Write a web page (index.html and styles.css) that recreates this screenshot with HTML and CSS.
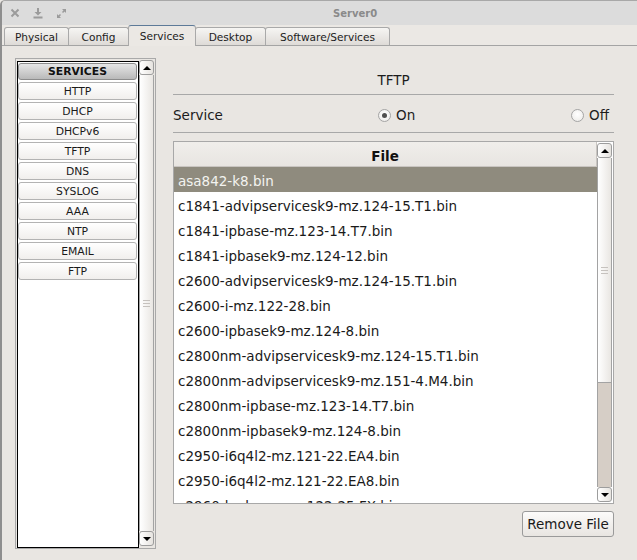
FILE: index.html
```html
<!DOCTYPE html>
<html>
<head>
<meta charset="utf-8">
<link rel="stylesheet" href="styles.css">
</head>
<body>
<div class="window">
  <div class="titlebar">
    <div class="tb-icons">
      <svg class="tb-icon" width="10" height="10" viewBox="0 0 10 10"><path d="M1.5 1.5 L8.5 8.5 M8.5 1.5 L1.5 8.5" stroke="#9b9b9b" stroke-width="2"/></svg>
      <svg class="tb-icon" width="10" height="11" viewBox="0 0 10 11"><path d="M5 0 V6" stroke="#9b9b9b" stroke-width="2"/><path d="M1.5 4 L5 7.5 L8.5 4 Z" fill="#9b9b9b"/><path d="M0.5 9.5 H9.5" stroke="#9b9b9b" stroke-width="2"/></svg>
      <svg class="tb-icon" width="11" height="11" viewBox="0 0 11 11"><path d="M6 1 H10 V5 Z" fill="#9b9b9b"/><path d="M8.5 2.5 L6.5 4.5" stroke="#9b9b9b" stroke-width="1.6"/><path d="M1 6 V10 H5 Z" fill="#9b9b9b"/><path d="M2.5 8.5 L4.5 6.5" stroke="#9b9b9b" stroke-width="1.6"/></svg>
    </div>
    <div class="tb-title">Server0</div>
  </div>
  <div class="tabs">
    <div class="tab tab-physical">Physical</div>
    <div class="tab tab-config">Config</div>
    <div class="tab tab-services active">Services</div>
    <div class="tab tab-desktop">Desktop</div>
    <div class="tab tab-software">Software/Services</div>
  </div>
  <div class="content">
    <div class="svc-panel">
      <div class="svc-list">
        <div class="svc-header">SERVICES</div>
        <div class="svc-btn">HTTP</div>
        <div class="svc-btn">DHCP</div>
        <div class="svc-btn">DHCPv6</div>
        <div class="svc-btn">TFTP</div>
        <div class="svc-btn">DNS</div>
        <div class="svc-btn">SYSLOG</div>
        <div class="svc-btn">AAA</div>
        <div class="svc-btn">NTP</div>
        <div class="svc-btn">EMAIL</div>
        <div class="svc-btn">FTP</div>
      </div>
      <div class="vscroll vscroll-left">
        <div class="sb-btn"><span class="arrow-up"></span></div>
        <div class="sb-thumb thumb-full"><span class="grip"></span></div>
        <div class="sb-btn"><span class="arrow-down"></span></div>
      </div>
    </div>
    <div class="main">
      <div class="main-title">TFTP</div>
      <div class="service-row">
        <div class="service-label">Service</div>
        <div class="radio-group"><span class="radio checked"></span><span>On</span></div>
        <div class="radio-group"><span class="radio"></span><span>Off</span></div>
      </div>
      <div class="file-table">
        <div class="file-col">
          <div class="file-header">File</div>
          <div class="file-rows">
            <div class="file-row selected">asa842-k8.bin</div>
            <div class="file-row">c1841-advipservicesk9-mz.124-15.T1.bin</div>
            <div class="file-row">c1841-ipbase-mz.123-14.T7.bin</div>
            <div class="file-row">c1841-ipbasek9-mz.124-12.bin</div>
            <div class="file-row">c2600-advipservicesk9-mz.124-15.T1.bin</div>
            <div class="file-row">c2600-i-mz.122-28.bin</div>
            <div class="file-row">c2600-ipbasek9-mz.124-8.bin</div>
            <div class="file-row">c2800nm-advipservicesk9-mz.124-15.T1.bin</div>
            <div class="file-row">c2800nm-advipservicesk9-mz.151-4.M4.bin</div>
            <div class="file-row">c2800nm-ipbase-mz.123-14.T7.bin</div>
            <div class="file-row">c2800nm-ipbasek9-mz.124-8.bin</div>
            <div class="file-row">c2950-i6q4l2-mz.121-22.EA4.bin</div>
            <div class="file-row">c2950-i6q4l2-mz.121-22.EA8.bin</div>
            <div class="file-row">c2960-lanbase-mz.122-25.FX.bin</div>
          </div>
        </div>
        <div class="vscroll vscroll-table">
          <div class="sb-btn"><span class="arrow-up"></span></div>
          <div class="sb-thumb thumb-table"><span class="grip"></span></div>
          <div class="sb-track"></div>
          <div class="sb-btn"><span class="arrow-down"></span></div>
        </div>
      </div>
      <div class="actions">
        <button class="remove-btn">Remove File</button>
      </div>
    </div>
  </div>
</div>
</body>
</html>
```
FILE: styles.css
```css
html, body {
  margin: 0;
  padding: 0;
}
body {
  width: 637px;
  height: 560px;
  overflow: hidden;
  background: #e9e6e2;
  font-family: "DejaVu Sans", "Noto Sans", sans-serif;
  color: #1c1c1c;
}
.window {
  height: 560px;
  box-sizing: border-box;
  border-left: 2px solid #8e8e8e;
  border-top: 1px solid #a8a8a8;
  border-top-left-radius: 5px;
  display: flex;
  flex-direction: column;
  background: #e9e6e2;
}
.titlebar {
  height: 24px;
  flex: none;
  background: #dcdcdc;
  display: flex;
  align-items: center;
  border-top-left-radius: 4px;
}
.tb-icons {
  display: flex;
  align-items: center;
  gap: 13px;
  padding-left: 8px;
  width: 62px;
}
.tb-icon {
  display: block;
}
.tb-title {
  margin-left: 261px;
  font-size: 10px;
  font-weight: bold;
  color: #8a8a8a;
}
.tabs {
  height: 20px;
  flex: none;
  display: flex;
  align-items: flex-end;
  padding-left: 2px;
  border-bottom: 1px solid #a4a4a4;
  background: #ebe8e4;
}
.tab {
  box-sizing: border-box;
  height: 18px;
  border: 1px solid #a9a9a9;
  border-bottom: none;
  border-radius: 3px 3px 0 0;
  background: linear-gradient(#f6f5f3, #dedbd7);
  font-size: 10.6px;
  line-height: 19px;
  text-align: center;
  color: #1c1c1c;
  margin-right: -1px;
}
.tab-physical { width: 65px; }
.tab-config { width: 61px; }
.tab-services { width: 68px; }
.tab-desktop { width: 71px; }
.tab-software { width: 125px; }
.tab.active {
  height: 21px;
  margin-bottom: -1px;
  background: #ebe8e4;
  border-top: 1px solid #5d7a98;
  line-height: 20px;
  position: relative;
  z-index: 1;
}
.content {
  display: flex;
  padding: 12px 0 0 13px;
  align-items: flex-start;
}
.svc-panel {
  box-sizing: border-box;
  width: 141px;
  height: 491px;
  border: 1px solid #a9a9a9;
  padding: 1px 1px 2px 1px;
  display: flex;
}
.svc-list {
  box-sizing: border-box;
  width: 122px;
  height: 487px;
  margin-top: 1px;
  border: 1px solid #000;
  background: #fff;
  display: flex;
  flex-direction: column;
  gap: 2px;
  padding-top: 1px;
}
.svc-header, .svc-btn {
  box-sizing: border-box;
  width: 119px;
  height: 18px;
  border-radius: 3px;
  font-size: 10.8px;
  line-height: 18px;
  text-align: center;
}
.svc-header {
  border: 1px solid #8c8c8c;
  background: linear-gradient(#e6e6e6, #b9b9b9);
  font-weight: bold;
  color: #111;
  height: 17px;
  line-height: 16px;
}
.svc-btn {
  border: 1px solid #b3b3b3;
  background: linear-gradient(#ffffff, #f1efed);
  color: #1a1a1a;
}
.vscroll {
  width: 15px;
  display: flex;
  flex-direction: column;
  flex: none;
}
.vscroll-left {
  height: 486px;
}
.sb-btn {
  box-sizing: border-box;
  height: 15px;
  flex: none;
  border: 1px solid #9d9d9d;
  border-radius: 3px;
  background: linear-gradient(90deg, #ffffff, #e6e3df);
  display: flex;
  align-items: center;
  justify-content: center;
}
.arrow-up {
  width: 0;
  height: 0;
  border-left: 4px solid transparent;
  border-right: 4px solid transparent;
  border-bottom: 4px solid #000;
}
.arrow-down {
  width: 0;
  height: 0;
  border-left: 4px solid transparent;
  border-right: 4px solid transparent;
  border-top: 4px solid #000;
}
.sb-thumb {
  box-sizing: border-box;
  border: 1px solid #a3a3a3;
  border-top: none;
  border-bottom: 1px solid #a3a3a3;
  background: linear-gradient(90deg, #ffffff, #e9e6e2);
  display: flex;
  align-items: center;
  justify-content: center;
}
.thumb-full {
  flex: 1;
  border-bottom: none;
}
.thumb-table {
  height: 225px;
  flex: none;
}
.grip {
  width: 7px;
  height: 7px;
  background: repeating-linear-gradient(#c6c2be 0, #c6c2be 1px, transparent 1px, transparent 3px);
}
.sb-track {
  flex: 1;
  background: #d6cec6;
  border-left: 1px solid #a3a3a3;
  border-right: 1px solid #a3a3a3;
}
.main {
  width: 441px;
  margin-left: 17px;
  display: flex;
  flex-direction: column;
}
.main-title {
  height: 21px;
  padding-top: 15px;
  line-height: 14px;
  font-size: 13.5px;
  text-align: center;
  border-bottom: 1px solid #a8a8a8;
  color: #1c1c1c;
}
.service-row {
  box-sizing: border-box;
  height: 38px;
  padding-top: 3px;
  border-bottom: 1px solid #a8a8a8;
  display: grid;
  grid-template-columns: 205px 1fr auto;
  align-items: center;
  font-size: 13.5px;
  padding-right: 5px;
}
.radio-group {
  display: flex;
  align-items: center;
  gap: 5px;
}
.radio {
  box-sizing: border-box;
  width: 13px;
  height: 13px;
  border-radius: 50%;
  border: 1px solid #a5a5a5;
  background: radial-gradient(circle at 50% 40%, #ffffff, #ebe9e6);
  display: flex;
  align-items: center;
  justify-content: center;
}
.radio.checked::after {
  content: "";
  width: 5px;
  height: 5px;
  border-radius: 50%;
  background: #4f4f4f;
}
.file-table {
  box-sizing: border-box;
  margin-top: 8px;
  height: 363px;
  border: 1px solid #a8a8a8;
  display: flex;
  background: #fff;
}
.file-col {
  flex: 1;
  display: flex;
  flex-direction: column;
  overflow: hidden;
}
.file-header {
  box-sizing: border-box;
  height: 25px;
  flex: none;
  background: linear-gradient(#f0eeeb, #e8e5e1);
  border-bottom: 1px solid #c9c5c1;
  border-right: 1px solid #c9c5c1;
  font-weight: bold;
  font-size: 13.5px;
  line-height: 28px;
  text-align: center;
  color: #111;
}
.file-rows {
  flex: 1;
  overflow: hidden;
}
.file-row {
  height: 25px;
  line-height: 29px;
  padding-left: 4px;
  font-size: 13.5px;
  white-space: nowrap;
  color: #1a1a1a;
}
.file-row.selected {
  background: #8f8b7e;
  color: #f3f3f0;
}
.vscroll-table {
  margin: 1px 1px 1px 0;
}
.actions {
  display: flex;
  justify-content: flex-end;
  margin-top: 7px;
}
.remove-btn {
  box-sizing: border-box;
  height: 26px;
  width: 92px;
  padding: 0;
  border: 1px solid #9a9a9a;
  border-radius: 3px;
  background: linear-gradient(#fcfbfa, #e8e5e1);
  font-family: "DejaVu Sans", sans-serif;
  font-size: 13.5px;
  color: #1a1a1a;
}
```
